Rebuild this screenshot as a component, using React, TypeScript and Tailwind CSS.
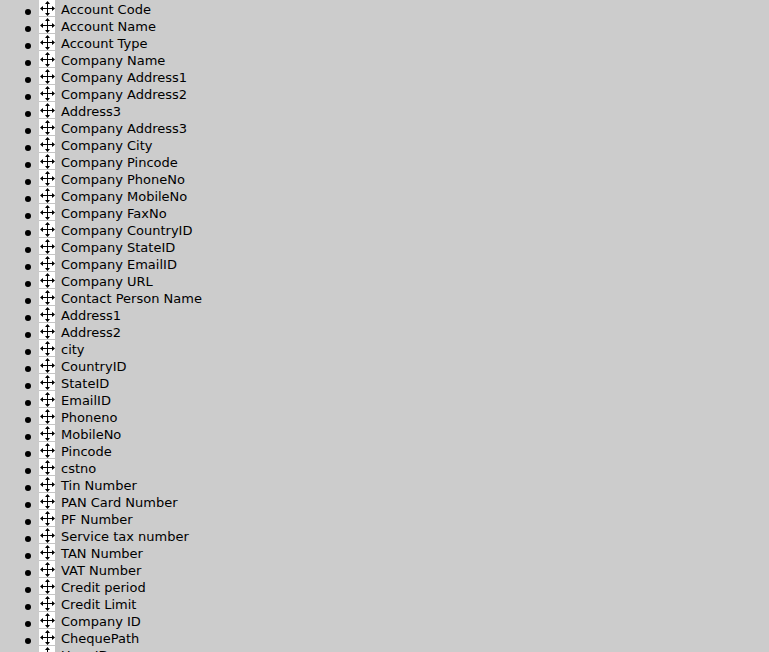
const fields = [
  "Account Code", "Account Name", "Account Type", "Company Name", "Company Address1", "Company Address2",
  "Address3", "Company Address3", "Company City", "Company Pincode", "Company PhoneNo", "Company MobileNo",
  "Company FaxNo", "Company CountryID", "Company StateID", "Company EmailID", "Company URL", "Contact Person Name",
  "Address1", "Address2", "city", "CountryID", "StateID", "EmailID", "Phoneno", "MobileNo", "Pincode", "cstno",
  "Tin Number", "PAN Card Number", "PF Number", "Service tax number", "TAN Number", "VAT Number", "Credit period",
  "Credit Limit", "Company ID", "ChequePath", "User ID",
];

function MoveIcon() {
  return (
    <span className="flex w-[21px] h-[17px] shrink-0 items-start justify-start bg-white border-r-[5px] border-b border-[#c4c4c4] pl-[1px] pt-[1px]">
      <svg width="15" height="15" viewBox="0 0 15 15" fill="none">
        <path d="M7.5 1v13M1 7.5h13" stroke="#000" strokeWidth="1" />
        <path d="M7.5 0L10 3H5zM7.5 15L5 12h5zM0 7.5L3 5v5zM15 7.5L12 10V5z" fill="#000" />
      </svg>
    </span>
  );
}

export default function App() {
  return (
    <div className="h-[652px] overflow-hidden bg-[#cccccc] font-['DejaVu_Sans','Verdana',sans-serif] text-[13px] text-black">
      <ul className="pl-[25px]">
        {fields.map((f) => (
          <li key={f} className="flex h-[17px] leading-[17px]">
            <span className="w-[6px] h-[6px] mt-[9px] mr-[8px] rounded-full bg-black shrink-0" />
            <MoveIcon />
            <span className="ml-px pt-px">{f}</span>
          </li>
        ))}
      </ul>
    </div>
  );
}
